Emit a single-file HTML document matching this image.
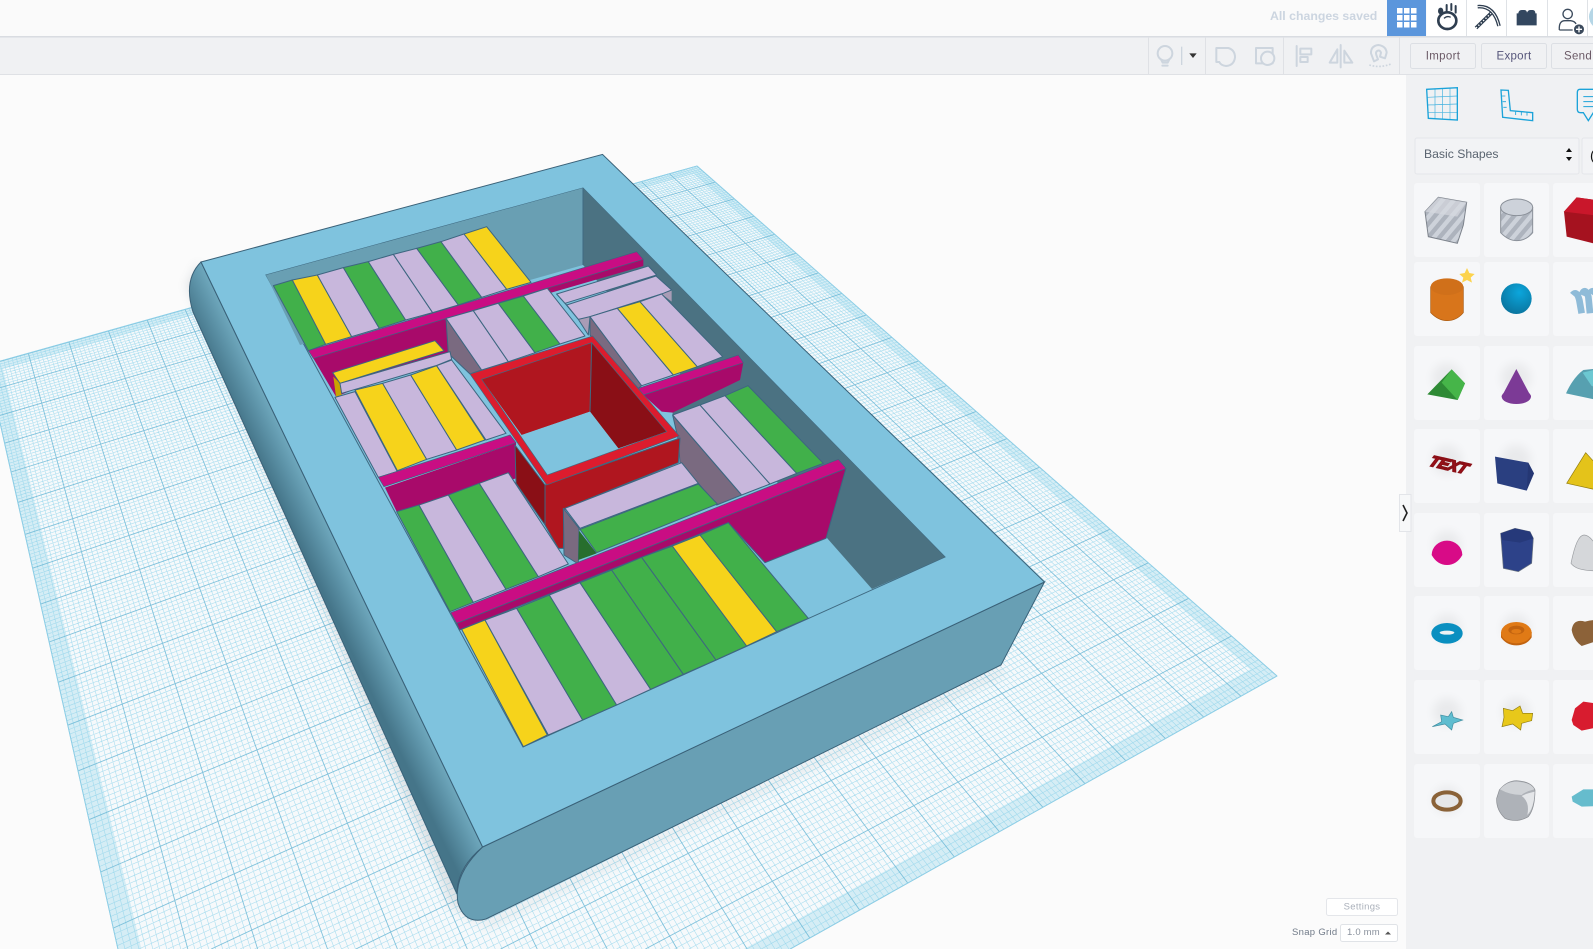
<!DOCTYPE html>
<html><head><meta charset="utf-8"><title>Tinkercad</title>
<style>
html,body{margin:0;padding:0;width:1593px;height:949px;overflow:hidden;background:#fbfbfb}
svg{display:block;font-family:"Liberation Sans",sans-serif}
.o{stroke:#3d6680;stroke-width:3;stroke-linejoin:round}
.l{fill:#c8b7dc}.g{fill:#41b04a}.y{fill:#f6d31b}.m{fill:#c90d83}.ms{fill:#a80a6a}.s{fill:#7a6a80}
.rt{fill:#dc1c2e}.rm{fill:#b0161f}.rd{fill:#8a0f16}
.ti{fill:none;stroke:#cdd5de;stroke-width:6;stroke-linejoin:round;stroke-linecap:round}
.bi{fill:none;stroke:#1ba3d9;stroke-width:4}
.tile{fill:#f6f7f9}
</style></head><body>
<svg xmlns="http://www.w3.org/2000/svg" width="1593" height="949" viewBox="0 0 1593 949">
<defs>
<linearGradient id="side" gradientUnits="userSpaceOnUse" x1="269" y1="480" x2="298.700" y2="465.700"><stop offset="0" stop-color="#457589"/><stop offset=".6" stop-color="#5d93a8"/><stop offset="1" stop-color="#6ea7bc"/></linearGradient>
<filter id="bl" x="-20%" y="-20%" width="140%" height="140%"><feGaussianBlur stdDeviation="5"/></filter>
<filter id="bs" x="-60%" y="-60%" width="220%" height="220%"><feGaussianBlur stdDeviation="5"/></filter>
<pattern id="st" width="26" height="26" patternUnits="userSpaceOnUse" patternTransform="rotate(40)"><rect width="26" height="26" fill="#adb3bd"/><rect width="13" height="26" fill="#cdd2da"/></pattern>
<radialGradient id="sph" cx=".6" cy=".3" r=".8"><stop offset="0" stop-color="#0ba6dc"/><stop offset="1" stop-color="#0a6f98"/></radialGradient>
</defs>
<rect width="1593" height="949" fill="#fbfbfb"/>

<!-- workplane -->
<polygon points="0,361 697,166 1277,676 790,949 118,949 0,422" fill="#f6f9fb"/>
<path id="gb" fill="#8fd2ea" fill-opacity=".32"/>
<path id="gm" fill="none" stroke="#8ed2ea" stroke-width=".6" stroke-opacity=".72"/>
<path id="gM" fill="none" stroke="#6cb9d6" stroke-width=".9" stroke-opacity=".85"/>
<polyline points="0,422 118,949" fill="none" stroke="#8fd0e8" stroke-width=".8"/>
<polyline points="0,361 697,166 1277,676 790,949" fill="none" stroke="#8fd0e8" stroke-width=".8"/>

<!-- shadow -->
<path d="M186,285 L198,262 L470,850 L480,925 L1001,668 L1006,672 L486,928 L450,905 Z" fill="#50606a" opacity=".14" filter="url(#bl)"/>

<!-- body -->
<path d="M201,262 L482.600,847 Q457,868 457,894 L193,312 Q183,280 201,262Z" fill="url(#side)" stroke="#3a6178"/>
<path d="M482.600,847 L1044.500,582 L1001,665 L486,919 Q465,925 458,903 Q453,875 482.600,847Z" fill="#689fb4" stroke="#3a6178"/>
<polygon points="201,262 602.500,154.400 1044.500,582 482.600,847" fill="#7fc3de" stroke="#3a6178"/>
<!-- hole -->
<polygon points="266,275 583,188 945,557 523,747" fill="#7fc3de" stroke="#3f6a82"/>
<polygon points="266,275 583,188 583,265 300,345" fill="#699fb3"/>
<polygon points="583,188 945,557 872,589 827,538 583,265" fill="#4b7282"/>
<line x1="583" y1="188" x2="583" y2="265" stroke="#3f6a82"/>

<g transform="translate(260,220) scale(.33333)">
 <!-- G1 -->
 <polygon class="g o" points="40,197 97,180 197,373 145,392"/>
 <polygon class="y o" points="97,180 172,165 275,350 197,373"/>
 <polygon class="l o" points="172,165 250,143 358,325 275,350"/>
 <polygon class="g o" points="250,143 325,125 437,300 358,325"/>
 <polygon class="l o" points="325,125 400,103 518,278 437,300"/>
 <polygon class="l o" points="400,103 470,85 595,255 518,278"/>
 <polygon class="g o" points="470,85 543,65 665,232 595,255"/>
 <polygon class="l o" points="543,65 612,42 740,208 665,232"/>
 <polygon class="y o" points="612,42 680,20 813,187 740,208"/>
 <!-- G3 G4 -->
 <polygon fill="#a99cb6" class="o" points="890,222 915,250 955,298 985,345 990,290 920,255"/>
 <polygon class="l o" points="890,222 1165,138 1190,165 915,250"/>
 <polygon fill="#a99cb6" points="1188,168 1235,210 1235,245 1205,222"/>
 <polygon class="l o" points="920,255 1188,168 1235,210 1210,220 990,290 955,298"/>
 <polygon class="s o" points="990,290 1145,497 1135,505 990,345"/>
 <polygon class="l o" points="990,290 1072,265 1240,465 1145,497"/>
 <polygon class="y o" points="1072,265 1140,245 1312,440 1240,465"/>
 <polygon class="l o" points="1140,245 1205,222 1388,410 1312,440"/>
 <!-- R1 -->
 <polygon class="ms" points="160,415 1150,118 1150,138 860,222 560,310 565,400 228,530"/>
 <polygon class="m o" style="stroke-width:2" points="145,392 1130,95 1150,118 160,415"/>
 <!-- G2 -->
 <polygon class="s o" points="558,295 665,450 630,462 565,400"/>
 <polygon class="l o" points="558,295 640,272 745,425 665,450"/>
 <polygon class="l o" points="640,272 715,250 825,398 745,425"/>
 <polygon class="g o" points="715,250 790,228 900,372 825,398"/>
 <polygon class="l o" points="790,228 862,205 975,348 900,372"/>
 <!-- G6 -->
 <polygon fill="#c9a400" points="220,470 240,490 245,525 228,530"/>
 <polygon class="y o" points="218,458 525,362 552,392 240,490"/>
 <polygon class="l o" points="240,490 570,395 575,418 528,437 245,520"/>
 <polygon class="l o" points="225,532 285,515 412,755 355,772"/>
 <polygon class="y o" points="285,510 368,490 500,718 412,752"/>
 <polygon class="l o" points="368,490 452,465 590,690 500,718"/>
 <polygon class="y o" points="452,465 530,437 675,660 590,690"/>
 <polygon class="l o" points="530,437 575,420 738,640 678,660"/>
 <!-- R2 -->
 <polygon fill="#4b7282" points="1238,575 1440,480 1470,500 1238,592"/>
 <polygon class="ms" points="1150,525 1450,428 1440,480 1238,578 1205,575"/>
 <polygon class="m o" style="stroke-width:2" points="1135,505 1435,405 1450,428 1150,525"/>
 <!-- R3 -->
 <polygon class="ms" points="375,803 768,668 768,775 410,875"/>
 <polygon class="m o" style="stroke-width:2" points="355,772 750,645 768,668 372,800"/>
</g>

<g transform="translate(440,440) scale(.33333)">
 <!-- G5 -->
 <polygon class="s o" points="698,-75 905,165 830,195 775,130 720,68 715,0"/>
 <polygon class="l o" points="698,-75 780,-105 990,132 905,165"/>
 <polygon class="l o" points="780,-105 855,-133 1070,100 990,132"/>
 <polygon class="g o" points="855,-133 924,-163 1150,70 1070,100"/>
 <!-- red sides -->
 <polygon class="rd o" points="225,15 315,135 315,255 228,130"/>
 <polygon class="rm o" points="315,135 720,-6 715,68 375,205 370,325 355,325 315,255"/>
 <!-- G7 -->
 <polygon class="s o" points="370,205 417,265 415,372 372,345"/>
 <polygon points="417,272 470,340 415,360" fill="#276e2d"/>
 <polygon class="g o" points="420,268 775,132 832,192 470,338"/>
 <polygon class="l o" points="375,205 725,68 775,130 420,265"/>
 <!-- G8 -->
 <polygon class="g o" points="-130,215 -63,195 100,487 30,515"/>
 <polygon class="l o" points="-63,195 25,165 198,448 100,487"/>
 <polygon class="g o" points="25,165 118,130 295,410 198,448"/>
 <polygon class="l o" points="118,130 205,98 385,372 295,410"/>
 <!-- R4 side -->
 <polygon class="ms o" points="50,550 1218,85 1158,295 975,368 865,248 58,570"/>
 <!-- G9 -->
 <polygon class="y o" points="65,568 135,540 322,885 250,920"/>
 <polygon class="l o" points="135,540 230,505 428,840 325,885"/>
 <polygon class="g o" points="230,505 328,465 530,795 428,840"/>
 <polygon class="l o" points="328,465 420,428 632,748 530,795"/>
 <polygon class="g o" points="420,428 515,390 730,703 632,748"/>
 <polygon class="g o" points="515,390 605,352 828,660 730,703"/>
 <polygon class="g o" points="605,352 697,318 920,618 828,660"/>
 <polygon class="y o" points="697,318 780,285 1010,575 920,618"/>
 <polygon class="g o" points="780,285 865,248 1105,535 1010,575"/>
 <polygon class="m o" style="stroke-width:2" points="32,518 1195,58 1218,85 50,550"/>
</g>

<g transform="translate(260,220) scale(.33333)">
 <!-- red box top -->
 <polygon class="rm" points="665,478 995,368 990,575 785,645"/>
 <polygon class="rd" points="995,368 1220,635 1075,685 990,575"/>
 <polygon fill="#7fc3de" points="785,645 990,575 1075,685 865,765"/>
 <line x1="995" y1="368" x2="990" y2="575" stroke="#3f6a82" stroke-width="3"/>
 <path class="rt" fill-rule="evenodd" stroke="#3f6a82" stroke-width="2" d="M630,462 L998,348 L1258,648 L860,795Z M665,478 L862,765 L1220,635 L995,368Z"/>
</g>

<!-- right panel -->
<rect x="1406" y="75" width="187" height="874" fill="#f0f1f3"/>

<!-- top bar -->
<rect x="0" y="0" width="1593" height="36" fill="#fafafa"/>
<rect x="0" y="36" width="1593" height="38" fill="#f0f1f3"/>
<rect x="0" y="36" width="1593" height="1.500" fill="#d9dce1"/>
<rect x="0" y="74" width="1593" height="1" fill="#dfe1e5"/>
<text x="1270" y="20" font-size="12.300" font-weight="700" fill="#ccd5e0">All changes saved</text>
<rect x="1387" y="0" width="39" height="36" fill="#5b96dc"/>
<rect x="1427" y="0" width="166" height="36" fill="#fff"/>
<rect x="1466" y="0" width="1" height="36" fill="#dfe2e6"/><rect x="1506" y="0" width="1" height="36" fill="#dfe2e6"/><rect x="1547" y="0" width="1" height="36" fill="#dfe2e6"/><rect x="1587" y="0" width="1" height="36" fill="#dfe2e6"/>
<g fill="#fff"><rect x="1397" y="8" width="5.500" height="5.500"/><rect x="1404" y="8" width="5.500" height="5.500"/><rect x="1411" y="8" width="5.500" height="5.500"/><rect x="1397" y="15" width="5.500" height="5.500"/><rect x="1404" y="15" width="5.500" height="5.500"/><rect x="1411" y="15" width="5.500" height="5.500"/><rect x="1397" y="22" width="5.500" height="5.500"/><rect x="1404" y="22" width="5.500" height="5.500"/><rect x="1411" y="22" width="5.500" height="5.500"/></g>

<g transform="translate(1100,0) scale(.33333)">
 <!-- hand + stone -->
 <ellipse cx="1042" cy="62" rx="27" ry="25" fill="none" stroke="#2f3e50" stroke-width="8"/>
 <path d="M1032,55 Q1042,46 1052,52" fill="none" stroke="#2f3e50" stroke-width="4"/>
 <path d="M1040,15 V32 M1054,12 V30 M1067,18 V38" stroke="#2f3e50" stroke-width="6" fill="none" stroke-linecap="round"/>
 <ellipse cx="1022" cy="33" rx="8" ry="10" fill="#2f3e50"/>
 <!-- pickaxe -->
 <path d="M1128,84 L1180,33" stroke="#2f3e50" stroke-width="11" fill="none"/>
 <path d="M1128,84 L1180,33" stroke="#fff" stroke-width="4" fill="none" stroke-dasharray="4 6"/>
 <path d="M1133,20 Q1182,16 1197,78" stroke="#2f3e50" stroke-width="11" fill="none"/>
 <path d="M1133,20 Q1182,16 1197,78" stroke="#fff" stroke-width="3" fill="none"/>
 <!-- brick -->
 <path d="M1250,76 V40 H1255 Q1256,30 1265,30 H1272 Q1280,30 1281,38 Q1284,30 1292,30 H1298 Q1306,30 1306,40 H1310 V76Z" fill="#33475f"/>
 <!-- user -->
 <circle cx="1403" cy="42" r="14" fill="none" stroke="#3b4a5c" stroke-width="4"/>
 <path d="M1378,90 Q1376,62 1395,62 L1412,62 Q1425,64 1428,72 M1378,90 L1418,90" fill="none" stroke="#3b4a5c" stroke-width="4"/>
 <circle cx="1437" cy="88" r="15" fill="#3b4a5c"/>
 <path d="M1428,88 H1446 M1437,79 V97" stroke="#fff" stroke-width="4"/>
 <circle cx="1505" cy="50" r="38" fill="#b5d6e6"/>
 <!-- toolbar icons -->
 <circle class="ti" cx="195" cy="160" r="22"/>
 <path class="ti" d="M184,180 L188,188 H203 L207,180 M187,197 H203"/>
 <path d="M245,140 V195" stroke="#cdd5de" stroke-width="4"/>
 <polygon points="268,160 290,160 279,174" fill="#333"/>
 <path class="ti" d="M349,144 H385 Q405,150 405,172 Q402,196 378,198 Q362,196 358,186 H349Z"/>
 <path class="ti" d="M468,144 H518 V190 H468Z"/>
 <circle cx="503" cy="175" r="20" fill="#f0f1f3" stroke="#cdd5de" stroke-width="6"/>
 <path class="ti" d="M590,138 V198"/>
 <rect class="ti" x="601" y="146" width="33" height="17"/><rect class="ti" x="601" y="171" width="22" height="15"/>
 <path class="ti" d="M722,135 V202"/>
 <path class="ti" d="M689,188 L712,148 V188Z M733,152 L757,188 H733Z"/>
 <path class="ti" d="M822,184 L813,160 Q812,138 835,135 Q858,138 860,158 L855,175 L840,170 L843,158 Q840,150 833,152 Q826,155 829,165 L834,178Z"/>
 <path d="M808,195 Q840,205 873,192" fill="none" stroke="#cdd5de" stroke-width="5" stroke-dasharray="5 5"/>
 <!-- panel icons -->
 <path class="bi" d="M980,268 L1072,263 V360 L985,355Z"/>
 <path d="M1005,267 V356 M1028,266 V358 M1050,265 V359 M982,292 L1072,288 M982,315 L1072,312 M984,338 L1072,337" stroke="#1ba3d9" stroke-width="2" fill="none" opacity=".8"/>
 <path class="bi" d="M1203,270 L1225,271 L1231,332 L1298,338 L1298,362 L1208,352Z"/>
 <path d="M1206,288 H1216 M1208,305 H1218 M1210,322 H1220 M1247,335 V345 M1264,336 V346 M1281,337 V347" stroke="#1ba3d9" stroke-width="2.500" fill="none"/>
 <path class="bi" d="M1500,268 H1440 Q1432,268 1432,278 V328 Q1432,338 1442,338 H1450 L1465,362 L1480,338 H1500"/>
 <path d="M1450,290 H1500 M1450,305 H1500 M1450,320 H1500" stroke="#1ba3d9" stroke-width="3"/>
</g>
<rect x="1148" y="37" width="1" height="37" fill="#dfe1e5"/><rect x="1205" y="37" width="1" height="37" fill="#dfe1e5"/><rect x="1283" y="37" width="1" height="37" fill="#dfe1e5"/><rect x="1399" y="37" width="1" height="37" fill="#dfe1e5"/>
<g fill="#f0f1f3" stroke="#dcdfe4"><rect x="1410.500" y="43.500" width="65" height="25" rx="2"/><rect x="1481.500" y="43.500" width="65" height="25" rx="2"/><rect x="1551.500" y="43.500" width="60" height="25" rx="2"/></g>
<text x="1443" y="59.500" font-size="11.500" fill="#6b5a66" text-anchor="middle" letter-spacing=".3">Import</text>
<text x="1514" y="59.500" font-size="11.500" fill="#55557a" text-anchor="middle" letter-spacing=".3">Export</text>
<text x="1564" y="59.500" font-size="11.500" fill="#6b5a66" letter-spacing=".3">Send</text>

<!-- dropdown -->
<rect x="1415" y="138" width="164" height="36" rx="2" fill="#f2f3f5" stroke="#e4e6ea"/>
<rect x="1582" y="138" width="30" height="36" rx="2" fill="#f2f3f5" stroke="#e4e6ea"/>
<text x="1424" y="158" font-size="12.200" fill="#5a6470">Basic Shapes</text>
<polygon points="1566,152 1572,152 1569,148" fill="#111"/><polygon points="1566,157 1572,157 1569,161" fill="#111"/>
<text x="1590" y="160" font-size="14" fill="#111">(</text>

<g class="tile">
<rect x="1414" y="183" width="66" height="74" rx="3"/><rect x="1484" y="183" width="65" height="74" rx="3"/><rect x="1553" y="183" width="60" height="74" rx="3"/>
<rect x="1414" y="262" width="66" height="74" rx="3"/><rect x="1484" y="262" width="65" height="74" rx="3"/><rect x="1553" y="262" width="60" height="74" rx="3"/>
<rect x="1414" y="346" width="66" height="74" rx="3"/><rect x="1484" y="346" width="65" height="74" rx="3"/><rect x="1553" y="346" width="60" height="74" rx="3"/>
<rect x="1414" y="429" width="66" height="74" rx="3"/><rect x="1484" y="429" width="65" height="74" rx="3"/><rect x="1553" y="429" width="60" height="74" rx="3"/>
<rect x="1414" y="513" width="66" height="74" rx="3"/><rect x="1484" y="513" width="65" height="74" rx="3"/><rect x="1553" y="513" width="60" height="74" rx="3"/>
<rect x="1414" y="596" width="66" height="74" rx="3"/><rect x="1484" y="596" width="65" height="74" rx="3"/><rect x="1553" y="596" width="60" height="74" rx="3"/>
<rect x="1414" y="680" width="66" height="74" rx="3"/><rect x="1484" y="680" width="65" height="74" rx="3"/><rect x="1553" y="680" width="60" height="74" rx="3"/>
<rect x="1414" y="764" width="66" height="74" rx="3"/><rect x="1484" y="764" width="65" height="74" rx="3"/><rect x="1553" y="764" width="60" height="74" rx="3"/>
</g>

<!-- soft shape halos -->
<g fill="#000" opacity=".05" filter="url(#bs)">
<circle cx="1447" cy="378" r="15"/><circle cx="1516" cy="378" r="15"/>
<circle cx="1447" cy="460" r="15"/><circle cx="1516" cy="460" r="15"/>
<circle cx="1447" cy="545" r="14"/>
<circle cx="1447" cy="628" r="14"/><circle cx="1516" cy="628" r="14"/>
<circle cx="1447" cy="712" r="14"/><circle cx="1516" cy="712" r="14"/>
<circle cx="1447" cy="800" r="14"/>
</g>

<g transform="translate(1400,180) scale(.33333)">
 <polygon points="75,95 115,52 200,67 190,135 172,190 85,170" fill="url(#st)" stroke="#7d838c" stroke-width="3"/>
 <polygon points="75,95 115,52 200,67 172,110" fill="#d5d9e0" opacity=".7"/>
 <path d="M302,82 V158 Q325,182 350,182 Q378,182 398,158 V82Z" fill="url(#st)" stroke="#8a9099" stroke-width="3"/>
 <ellipse cx="350" cy="82" rx="48" ry="25" fill="#cdd2da" stroke="#8a9099" stroke-width="3"/>
 <polygon points="492,95 530,52 600,62 600,195 500,170" fill="#a5121f"/><polygon points="492,95 530,52 600,62 600,108" fill="#c9172b"/>
 <path d="M92,320 V398 Q115,422 141,422 Q170,422 190,398 V320Z" fill="#d8751b" stroke="#a9590f" stroke-width="2"/>
 <ellipse cx="141" cy="320" rx="49" ry="25" fill="#d0701a"/>
 <polygon points="201,264 208,279 224,282 212,293 216,308 201,300 186,308 190,293 178,282 194,279" fill="#fcd34d"/>
 <circle cx="349" cy="356" r="46" fill="url(#sph)"/>
 <path d="M518,345 Q530,330 538,360 L545,400 M545,345 Q555,320 565,350 L570,400 M570,340 Q580,325 590,345" fill="none" stroke="#8fbbd8" stroke-width="20"/>
 <polygon points="82,643 155,568 195,610 173,660" fill="#2e8a35"/>
 <polygon points="125,608 155,568 195,610 173,660" fill="#46b549"/>
 <ellipse cx="349" cy="650" rx="44" ry="22" fill="#7c3a96"/><polygon points="349,567 393,650 305,650" fill="#7c3a96"/>
 <path d="M498,640 Q520,592 550,570 L600,565 V662Z" fill="#57a0b0"/><path d="M548,578 L600,565 V625 L575,618Z" fill="#6cc8d2"/>
 <text x="0" y="0" transform="translate(84,856) rotate(13) skewX(-14)" font-size="46" font-weight="700" font-style="italic" fill="#b5121f" stroke="#8a0f16" stroke-width="5" letter-spacing="-1">TEXT</text>
 <polygon points="285,830 385,848 402,880 380,932 292,910" fill="#2a3f80"/>
 <polygon points="385,848 402,880 380,932" fill="#1f3068" opacity=".5"/>
 <polygon points="500,910 557,818 600,865 600,932" fill="#e4c31a" stroke="#8f7b10" stroke-width="2"/>
</g>
<g transform="translate(1400,500) scale(.33333)">
 <path d="M95,165 A46,43 0 0 1 187,165 Q170,195 141,195 Q112,195 95,165Z" fill="#d80b87"/>
 <polygon points="302,100 345,85 390,95 400,115 395,190 355,215 310,205" fill="#2d4289" stroke="#6b7580" stroke-width="2"/>
 <polygon points="302,100 345,85 390,95 400,115 360,128 305,120" fill="#26397a"/>
 <path d="M513,190 Q530,105 552,105 Q575,105 600,160 V212 Q530,215 513,190Z" fill="#d5d7da" stroke="#9a9da1" stroke-width="2"/>
 <ellipse cx="141" cy="400" rx="47" ry="31" fill="#0a8fc0"/><ellipse cx="141" cy="398" rx="22" ry="6" fill="#eef2f4"/>
 <path d="M303,396 V412 Q320,436 349,436 Q380,436 395,412 V396Z" fill="#c2630f"/><ellipse cx="349" cy="398" rx="46" ry="32" fill="#e07a16"/>
 <ellipse cx="349" cy="390" rx="24" ry="13" fill="#c2630f"/><ellipse cx="349" cy="394" rx="15" ry="7" fill="#e07a16"/>
 <path d="M515,390 Q520,355 555,365 Q590,355 600,365 V420 L545,438 Q520,420 515,390Z" fill="#8c6239"/>
 <polygon points="97,680 125,665 122,645 145,650 155,635 160,652 188,660 160,670 155,690 135,672" fill="#5fbdd0" stroke="#3f8da0" stroke-width="2"/>
 <polygon points="310,625 338,632 360,618 368,640 398,640 395,662 365,670 362,690 338,672 306,680 312,652" fill="#e8c81a" stroke="#8f7b10" stroke-width="2"/>
 <polygon points="515,660 525,625 550,605 600,612 600,680 545,692 520,675" fill="#d81c2f"/>
 <ellipse cx="141" cy="903" rx="41" ry="26" fill="#e6e7e9" stroke="#8a6238" stroke-width="12"/>
 <path d="M298,870 Q320,842 350,842 Q395,845 405,870 Q405,925 385,950 Q350,970 315,955 Q288,930 290,895Z" fill="#aeb2b8" stroke="#8a8d92" stroke-width="2"/>
 <path d="M300,868 Q320,845 350,845 Q395,848 403,868 Q375,875 365,885 Q330,885 300,868Z" fill="#cfd2d6"/>
 <path d="M404,875 Q402,925 382,945 Q390,905 365,888 Q380,880 404,875Z" fill="#e4e6e9"/>
 <polygon points="515,890 550,868 600,868 600,918 545,920 518,905" fill="#66bccd"/>
</g>

<!-- collapse tab -->
<rect x="1399.500" y="494.500" width="11.500" height="37" fill="#f7f8f9" stroke="#e3e5e9"/>
<path d="M1403,505 L1407,513 L1403,521" fill="none" stroke="#222" stroke-width="1.600"/>

<!-- settings -->
<rect x="1326.500" y="898.500" width="71" height="17" rx="2" fill="#fff" stroke="#e4e6ea"/>
<text x="1362" y="909.500" font-size="9.500" fill="#aab0ba" text-anchor="middle" letter-spacing=".3">Settings</text>
<text x="1292" y="935" font-size="9.500" fill="#707a88" letter-spacing=".3">Snap Grid</text>
<rect x="1340.500" y="924.500" width="57" height="17" rx="2" fill="#fff" stroke="#e0e3e7"/>
<text x="1347" y="935" font-size="9.500" fill="#8a919c" letter-spacing=".2">1.0 mm</text>
<polygon points="1385,934.500 1391,934.500 1388,931.500" fill="#555"/>
</svg>
<script>
(function(){var x0=-13,y0=365,x1=697,y1=166,x2=1277,y2=676,x3=193,y3=1284;
var dx1=x1-x2,dx2=x3-x2,dy1=y1-y2,dy2=y3-y2,sx=x0-x1+x2-x3,sy=y0-y1+y2-y3,D=dx1*dy2-dx2*dy1;
var g=(sx*dy2-dx2*sy)/D,h=(dx1*sy-sx*dy1)/D,a=x1-x0+g*x1,b=x3-x0+h*x3,d=y1-y0+g*y1,e=y3-y0+h*y3;
function P(u,v){var w=g*u+h*v+1;return [(a*u+b*v+x0)/w,(d*u+e*v+y0)/w];}
var planes=[[0,0,1],[0,1593,-1],[1,0,1],[1,949,-1]];
function clip(pts){for(var k=0;k<4;k++){var A=planes[k][0],c=planes[k][1],s=planes[k][2],o=[];
 for(var i=0;i<pts.length;i++){var p=pts[i],q=pts[(i+1)%pts.length],ip=s*(p[A]-c)>=0,iq=s*(q[A]-c)>=0;
  if(ip)o.push(p);
  if(ip!=iq){var t=(c-p[A])/(q[A]-p[A]);o.push([p[0]+t*(q[0]-p[0]),p[1]+t*(q[1]-p[1])]);}}
 pts=o;if(!pts.length)return "";}
 var r="";for(var n=0;n<pts.length;n++)r+=(n?"L":"M")+pts[n][0].toFixed(1)+","+pts[n][1].toFixed(1);return r;}
var N=21,M=20,m="",J="";
for(var i=0;i<=N*10;i++){var u=i/(N*10),s=clip([P(u,0),P(u,1)]);if(i%10==0)J+=s;else m+=s;}
for(var j=0;j<=M*10;j++){var v=j/(M*10),t=clip([P(0,v),P(1,v)]);if(j%10==0)J+=t;else m+=t;}
document.getElementById("gm").setAttribute("d",m);
document.getElementById("gM").setAttribute("d",J);
var q=.016,B="";
B+=clip([P(0,0),P(1,0),P(1,q),P(0,q)])+"Z";
B+=clip([P(0,1-q),P(1,1-q),P(1,1),P(0,1)])+"Z";
B+=clip([P(0,q),P(q,q),P(q,1-q),P(0,1-q)])+"Z";
B+=clip([P(1-q,q),P(1,q),P(1,1-q),P(1-q,1-q)])+"Z";
document.getElementById("gb").setAttribute("d",B);
})();
</script>
</body></html>
